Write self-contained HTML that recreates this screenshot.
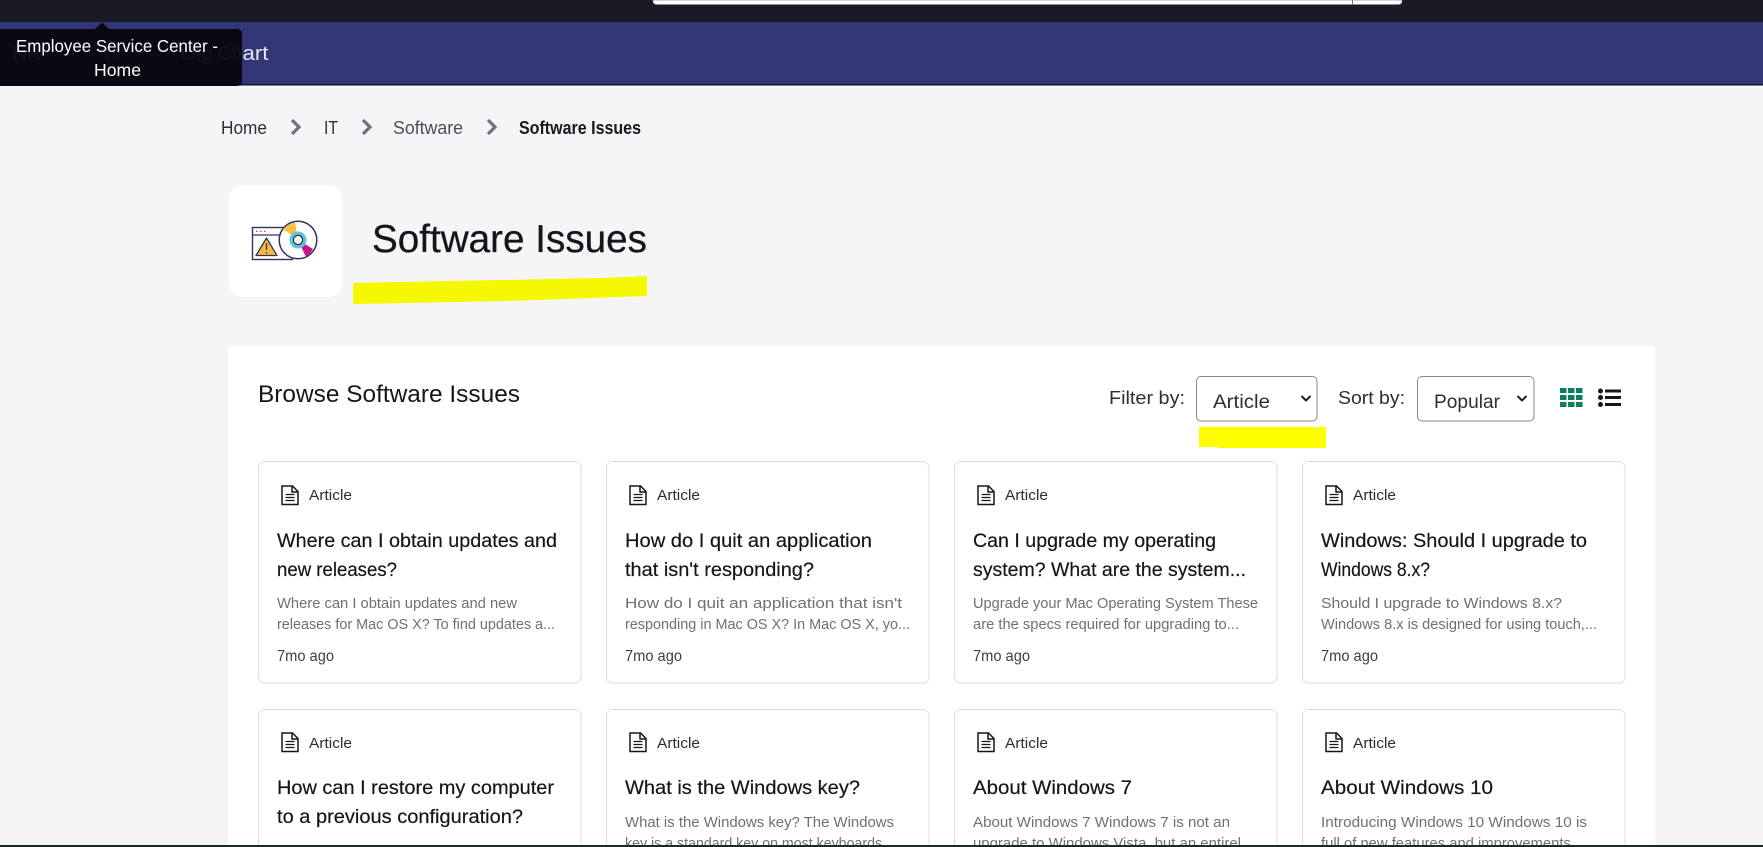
<!DOCTYPE html>
<html lang="en">
<head>
<meta charset="utf-8">
<title>Software Issues</title>
<style>
html,body{margin:0;padding:0;width:1763px;height:847px;overflow:hidden;background:#f5f5f7}
svg{display:block;position:absolute;left:0;top:0}
text{font-family:"Liberation Sans",sans-serif;white-space:pre}
.t{font-size:19.5px;fill:#14161c;stroke:#14161c;stroke-width:.2px}
.d{font-size:15.2px;fill:#6c7079}
.m{font-size:15.4px;fill:#3c404a}
.a{font-size:15px;fill:#2b2e36}
.b{font-size:18.2px;fill:#2c2f38}
.c{fill:none;stroke:#6a7381;stroke-width:3.2;stroke-linecap:butt}
</style>
</head>
<body>
<svg width="1763" height="847" viewBox="0 0 1763 847" xmlns="http://www.w3.org/2000/svg">
<defs>
<g id="doc" fill="none" stroke="#14161f" stroke-width="1.5">
<path d="M1 1H11.5L17 6.5V19.5H1Z"/>
<path d="M11 1V7H17"/>
<path d="M4.5 9.5H13.5M4.5 12.5H13.5M4.5 15.5H13.5" stroke-width="1.3"/>
</g>
</defs>

<rect width="1763" height="847" fill="#f5f5f7"/>
<rect width="1763" height="22" fill="#1a1a26"/>
<rect y="22" width="1763" height="62" fill="#323576"/>
<rect y="84" width="1763" height="1.5" fill="#12142e"/>
<path d="M653 0H1402V1Q1402 4.5 1398 4.500H657Q653 4.500 653 1Z" fill="#fff" stroke="#8b8d96" stroke-width=".7"/>
<rect x="1352" y="0" width="1" height="5" fill="#777"/>

<text x="12" y="60" font-size="19" fill="#e8e8f0" textLength="30" lengthAdjust="spacingAndGlyphs">HR</text>
<text x="105" y="60" font-size="19" fill="#e8e8f0" textLength="13" lengthAdjust="spacingAndGlyphs">IT</text>
<text y="60" font-size="20" fill="#e8e8f0"><tspan x="181" textLength="61" lengthAdjust="spacingAndGlyphs">Org Ch</tspan><tspan x="242.500" textLength="26" lengthAdjust="spacingAndGlyphs">art</tspan></text>
<path d="M102 22.500L109 29H95Z" fill="#05060d"/>
<path d="M0 29H237Q242 29 242 34V81Q242 86 237 86H0Z" fill="#05060d" fill-opacity=".94"/>
<text x="16" y="52" font-size="17.5" fill="#fff" textLength="202" lengthAdjust="spacingAndGlyphs">Employee Service Center -</text>
<text x="94" y="76" font-size="17.5" fill="#fff" textLength="47" lengthAdjust="spacingAndGlyphs">Home</text>

<text class="b" x="221" y="134" textLength="46" lengthAdjust="spacingAndGlyphs">Home</text>
<path class="c" d="M292 120L299 127L292 134"/>
<text class="b" x="324" y="134" textLength="14" lengthAdjust="spacingAndGlyphs">IT</text>
<path class="c" d="M363 120L370 127L363 134"/>
<text class="b" x="393" y="134" textLength="70" lengthAdjust="spacingAndGlyphs" style="fill:#4a4d56">Software</text>
<path class="c" d="M488 120L495 127L488 134"/>
<text x="519" y="134" font-size="18.2" font-weight="700" fill="#17191f" textLength="122" lengthAdjust="spacingAndGlyphs">Software Issues</text>

<rect x="229" y="185" width="113" height="112" rx="13" fill="#fff"/>
<rect x="252.500" y="227.500" width="40" height="32" fill="#fff" stroke="#33345c" stroke-width="1.4"/>
<path d="M252.500 235H290" stroke="#33345c" stroke-width="1.2"/>
<path d="M256 231.300h1.500M260 231.300h1.500M264 231.300h1.500" stroke="#d6246e" stroke-width="1.2"/>
<path d="M266.500 238L277 255.500H256Z" fill="#f9b840" stroke="#33345c" stroke-width="1.3" stroke-linejoin="round"/>
<path d="M266.500 243V250M266.500 252V253.500" stroke="#33345c" stroke-width="1.3"/>
<circle cx="298" cy="240" r="18.800" fill="#fff" stroke="#33345c" stroke-width="1.5"/>
<path d="M298 240L283 229Q288 224 295 222Z" fill="#f9c04a"/>
<path d="M298 240L313 249Q311 253 306 257Z" fill="#c9148c"/>
<circle cx="298" cy="240" r="8.500" fill="#5cc6dd"/>
<circle cx="298" cy="240" r="4.600" fill="#fff" stroke="#33345c" stroke-width="1.300"/>

<text x="372" y="252" font-size="38.500" fill="#14161c" stroke="#14161c" stroke-width=".3" textLength="275" lengthAdjust="spacingAndGlyphs">Software Issues</text>
<path d="M353 283L500 280L600 278L647 276V296L507 301L353 304Z" fill="#f6f800"/>

<rect x="228" y="346" width="1427" height="510" rx="4" fill="#fff"/>
<text x="258" y="402" font-size="24.500" fill="#14161c" textLength="262" lengthAdjust="spacingAndGlyphs">Browse Software Issues</text>

<text x="1109" y="404" font-size="18.500" fill="#2c2f38" textLength="76" lengthAdjust="spacingAndGlyphs">Filter by:</text>
<rect x="1196.500" y="376.500" width="120.500" height="44.500" rx="4.500" fill="#fff" stroke="#85878c"/>
<text x="1213" y="408" font-size="19" fill="#2c2f38" textLength="57" lengthAdjust="spacingAndGlyphs">Article</text>
<path d="M1301.500 396L1306 400.500L1310.500 396" fill="none" stroke="#1c1e26" stroke-width="2"/>
<text x="1338" y="404" font-size="18.500" fill="#2c2f38" textLength="67" lengthAdjust="spacingAndGlyphs">Sort by:</text>
<rect x="1417.500" y="376.500" width="116.500" height="44.500" rx="4.500" fill="#fff" stroke="#85878c"/>
<text x="1434" y="408" font-size="19" fill="#2c2f38" textLength="66" lengthAdjust="spacingAndGlyphs">Popular</text>
<path d="M1517.500 396L1522 400.500L1526.500 396" fill="none" stroke="#1c1e26" stroke-width="2"/>
<path d="M1199 427H1326V448H1218V447H1199Z" fill="#ffff00"/>

<g fill="#0d7c62">
<rect x="1560" y="388" width="6.500" height="5"/><rect x="1568" y="388" width="6.500" height="5"/><rect x="1576" y="388" width="6.500" height="5"/>
<rect x="1560" y="395" width="6.500" height="5"/><rect x="1568" y="395" width="6.500" height="5"/><rect x="1576" y="395" width="6.500" height="5"/>
<rect x="1560" y="402" width="6.500" height="5"/><rect x="1568" y="402" width="6.500" height="5"/><rect x="1576" y="402" width="6.500" height="5"/>
</g>
<g fill="#15171f">
<circle cx="1600.500" cy="391" r="2.500"/><circle cx="1600.500" cy="397.500" r="2.500"/><circle cx="1600.500" cy="404.500" r="2.500"/>
<rect x="1605" y="389.500" width="16" height="3"/><rect x="1605" y="396" width="16" height="3"/><rect x="1605" y="403" width="16" height="3"/>
</g>

<g fill="#fff" stroke="#dcdde0">
<rect x="258.500" y="461.500" width="322.500" height="221.500" rx="6"/>
<rect x="606.500" y="461.500" width="322.500" height="221.500" rx="6"/>
<rect x="954.500" y="461.500" width="322.500" height="221.500" rx="6"/>
<rect x="1302.500" y="461.500" width="322.500" height="221.500" rx="6"/>
<rect x="258.500" y="709.500" width="322.500" height="150" rx="6"/>
<rect x="606.500" y="709.500" width="322.500" height="150" rx="6"/>
<rect x="954.500" y="709.500" width="322.500" height="150" rx="6"/>
<rect x="1302.500" y="709.500" width="322.500" height="150" rx="6"/>
</g>

<use href="#doc" x="281" y="485"/><use href="#doc" x="629" y="485"/><use href="#doc" x="977" y="485"/><use href="#doc" x="1325" y="485"/>
<use href="#doc" x="281" y="732"/><use href="#doc" x="629" y="732"/><use href="#doc" x="977" y="732"/><use href="#doc" x="1325" y="732"/>

<text class="a" x="309" y="500" textLength="43" lengthAdjust="spacingAndGlyphs">Article</text>
<text class="a" x="657" y="500" textLength="43" lengthAdjust="spacingAndGlyphs">Article</text>
<text class="a" x="1005" y="500" textLength="43" lengthAdjust="spacingAndGlyphs">Article</text>
<text class="a" x="1353" y="500" textLength="43" lengthAdjust="spacingAndGlyphs">Article</text>
<text class="a" x="309" y="748" textLength="43" lengthAdjust="spacingAndGlyphs">Article</text>
<text class="a" x="657" y="748" textLength="43" lengthAdjust="spacingAndGlyphs">Article</text>
<text class="a" x="1005" y="748" textLength="43" lengthAdjust="spacingAndGlyphs">Article</text>
<text class="a" x="1353" y="748" textLength="43" lengthAdjust="spacingAndGlyphs">Article</text>

<text class="t" x="277" y="547" textLength="280" lengthAdjust="spacingAndGlyphs">Where can I obtain updates and</text>
<text class="t" x="277" y="576" textLength="120" lengthAdjust="spacingAndGlyphs">new releases?</text>
<text class="d" x="277" y="608" textLength="240" lengthAdjust="spacingAndGlyphs">Where can I obtain updates and new</text>
<text class="d" x="277" y="629" textLength="278" lengthAdjust="spacingAndGlyphs">releases for Mac OS X? To find updates a...</text>
<text class="m" x="277" y="661" textLength="57" lengthAdjust="spacingAndGlyphs">7mo ago</text>

<text class="t" x="625" y="547" textLength="247" lengthAdjust="spacingAndGlyphs">How do I quit an application</text>
<text class="t" x="625" y="576" textLength="189" lengthAdjust="spacingAndGlyphs">that isn't responding?</text>
<text class="d" x="625" y="608" textLength="277" lengthAdjust="spacingAndGlyphs">How do I quit an application that isn't</text>
<text class="d" x="625" y="629" textLength="285" lengthAdjust="spacingAndGlyphs">responding in Mac OS X? In Mac OS X, yo...</text>
<text class="m" x="625" y="661" textLength="57" lengthAdjust="spacingAndGlyphs">7mo ago</text>

<text class="t" x="973" y="547" textLength="243" lengthAdjust="spacingAndGlyphs">Can I upgrade my operating</text>
<text class="t" x="973" y="576" textLength="273" lengthAdjust="spacingAndGlyphs">system? What are the system...</text>
<text class="d" x="973" y="608" textLength="285" lengthAdjust="spacingAndGlyphs">Upgrade your Mac Operating System These</text>
<text class="d" x="973" y="629" textLength="266" lengthAdjust="spacingAndGlyphs">are the specs required for upgrading to...</text>
<text class="m" x="973" y="661" textLength="57" lengthAdjust="spacingAndGlyphs">7mo ago</text>

<text class="t" x="1321" y="547" textLength="266" lengthAdjust="spacingAndGlyphs">Windows: Should I upgrade to</text>
<text class="t" x="1321" y="576" textLength="109" lengthAdjust="spacingAndGlyphs">Windows 8.x?</text>
<text class="d" x="1321" y="608" textLength="241" lengthAdjust="spacingAndGlyphs">Should I upgrade to Windows 8.x?</text>
<text class="d" x="1321" y="629" textLength="276" lengthAdjust="spacingAndGlyphs">Windows 8.x is designed for using touch,...</text>
<text class="m" x="1321" y="661" textLength="57" lengthAdjust="spacingAndGlyphs">7mo ago</text>

<text class="t" x="277" y="794" textLength="277" lengthAdjust="spacingAndGlyphs">How can I restore my computer</text>
<text class="t" x="277" y="823" textLength="246" lengthAdjust="spacingAndGlyphs">to a previous configuration?</text>

<text class="t" x="625" y="794" textLength="235" lengthAdjust="spacingAndGlyphs">What is the Windows key?</text>
<text class="d" x="625" y="827" textLength="269" lengthAdjust="spacingAndGlyphs">What is the Windows key? The Windows</text>
<text class="d" x="625" y="848" textLength="261" lengthAdjust="spacingAndGlyphs">key is a standard key on most keyboards.</text>

<text class="t" x="973" y="794" textLength="159" lengthAdjust="spacingAndGlyphs">About Windows 7</text>
<text class="d" x="973" y="827" textLength="257" lengthAdjust="spacingAndGlyphs">About Windows 7 Windows 7 is not an</text>
<text class="d" x="973" y="848" textLength="268" lengthAdjust="spacingAndGlyphs">upgrade to Windows Vista, but an entirel</text>

<text class="t" x="1321" y="794" textLength="172" lengthAdjust="spacingAndGlyphs">About Windows 10</text>
<text class="d" x="1321" y="827" textLength="266" lengthAdjust="spacingAndGlyphs">Introducing Windows 10 Windows 10 is</text>
<text class="d" x="1321" y="848" textLength="254" lengthAdjust="spacingAndGlyphs">full of new features and improvements.</text>

<rect y="845" width="1763" height="2" fill="#1c2a1f"/>
</svg>
</body>
</html>
